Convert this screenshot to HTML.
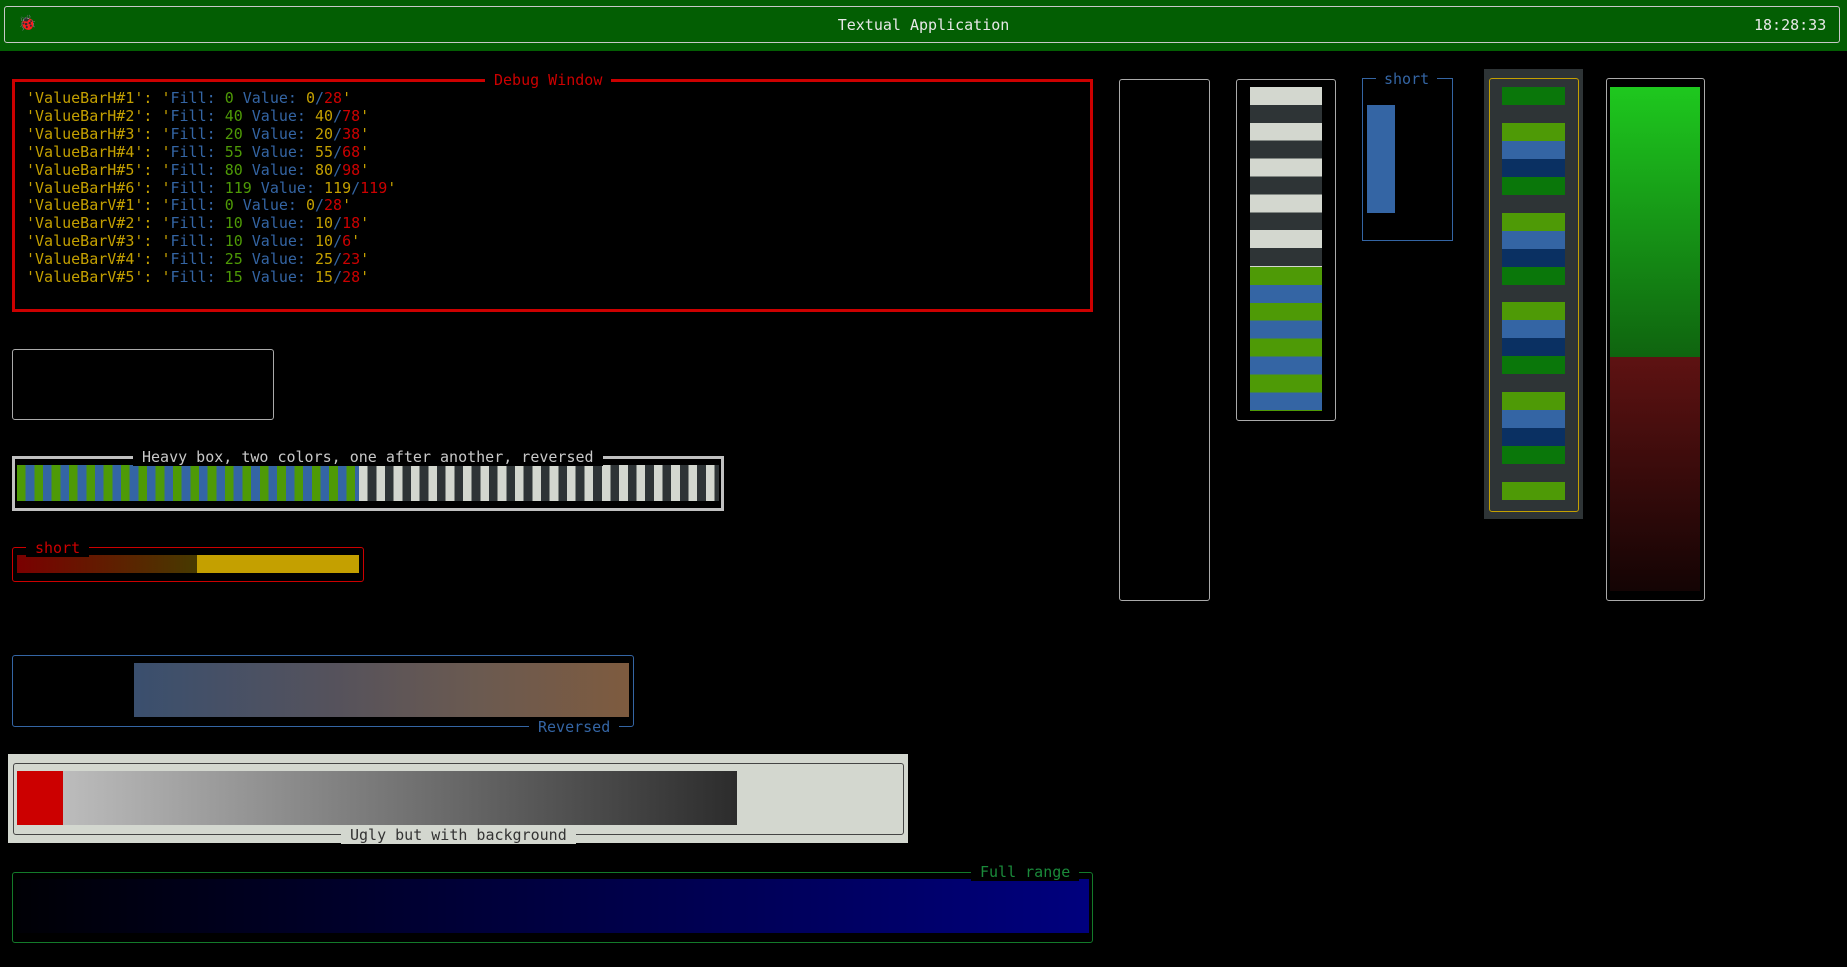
<!DOCTYPE html>
<html><head><meta charset="utf-8"><style>
*{margin:0;padding:0;box-sizing:border-box}
body{width:1847px;height:967px;background:#000;position:relative;overflow:hidden;font-family:"DejaVu Sans Mono","Liberation Mono",monospace;font-size:15px;line-height:17.9px}
div,span.a{position:absolute}
.t{position:absolute;background:#000;padding:0 9px;white-space:pre;line-height:18px}
.dbg{left:26px;top:90px;white-space:pre;color:#c4a000}
.k{color:#c4a000}.b{color:#3465a4}.g{color:#4e9a06}.r{color:#cc0000}
</style></head><body>
<!-- header -->
<div style="left:0;top:0;width:1847px;height:51px;background:#035e03"></div>
<div style="left:4px;top:6px;width:1836px;height:37px;border:1px solid #c8c8c8;border-radius:3px"></div>
<div style="left:18px;top:15px;color:#e03030;font-size:15px">🐞</div>
<div style="left:0;top:17px;width:1847px;text-align:center;color:#e8e8e8;white-space:pre">Textual Application</div>
<div style="left:1754px;top:17px;color:#e8e8e8">18:28:33</div>

<!-- debug window -->
<div style="left:12px;top:79px;width:1081px;height:233px;border:3px solid #cc0000"></div>
<div class="t" style="left:485px;top:71px;color:#cc0000">Debug Window</div>
<div class="dbg"><span class="k">'ValueBarH#1'</span>: '<span class="b">Fill: </span><span class="g">0</span><span class="b"> Value: </span>0<span class="b">/</span><span class="r">28</span>'
'ValueBarH#2': '<span class="b">Fill: </span><span class="g">40</span><span class="b"> Value: </span>40<span class="b">/</span><span class="r">78</span>'
'ValueBarH#3': '<span class="b">Fill: </span><span class="g">20</span><span class="b"> Value: </span>20<span class="b">/</span><span class="r">38</span>'
'ValueBarH#4': '<span class="b">Fill: </span><span class="g">55</span><span class="b"> Value: </span>55<span class="b">/</span><span class="r">68</span>'
'ValueBarH#5': '<span class="b">Fill: </span><span class="g">80</span><span class="b"> Value: </span>80<span class="b">/</span><span class="r">98</span>'
'ValueBarH#6': '<span class="b">Fill: </span><span class="g">119</span><span class="b"> Value: </span>119<span class="b">/</span><span class="r">119</span>'
'ValueBarV#1': '<span class="b">Fill: </span><span class="g">0</span><span class="b"> Value: </span>0<span class="b">/</span><span class="r">28</span>'
'ValueBarV#2': '<span class="b">Fill: </span><span class="g">10</span><span class="b"> Value: </span>10<span class="b">/</span><span class="r">18</span>'
'ValueBarV#3': '<span class="b">Fill: </span><span class="g">10</span><span class="b"> Value: </span>10<span class="b">/</span><span class="r">6</span>'
'ValueBarV#4': '<span class="b">Fill: </span><span class="g">25</span><span class="b"> Value: </span>25<span class="b">/</span><span class="r">23</span>'
'ValueBarV#5': '<span class="b">Fill: </span><span class="g">15</span><span class="b"> Value: </span>15<span class="b">/</span><span class="r">28</span>'</div>

<!-- empty box -->
<div style="left:12px;top:349px;width:262px;height:71px;border:1px solid #aaa;border-radius:3px"></div>

<!-- heavy box -->
<div style="left:12px;top:456px;width:712px;height:55px;border:3px solid #c0c0c0"></div>
<div style="left:17px;top:465px;width:342px;height:36px;background:repeating-linear-gradient(90deg,#4e9a06 0 8.67px,#3465a4 8.67px 17.34px)"></div>
<div style="left:359px;top:465px;width:360px;height:36px;background:repeating-linear-gradient(90deg,#d3d7cf 0 8.67px,#2e3436 8.67px 17.34px)"></div>
<div class="t" style="left:133px;top:448px;color:#c8c8c8">Heavy box, two colors, one after another, reversed</div>

<!-- short red -->
<div style="left:12px;top:547px;width:352px;height:35px;border:1px solid #cc0000;border-radius:3px"></div>
<div style="left:17px;top:555px;width:180px;height:18px;background:linear-gradient(90deg,#7a0000,#473a00)"></div>
<div style="left:197px;top:555px;width:162px;height:18px;background:#c4a000"></div>
<div class="t" style="left:26px;top:539px;color:#cc0000">short</div>

<!-- reversed -->
<div style="left:12px;top:655px;width:622px;height:72px;border:1px solid #3465a4;border-radius:3px"></div>
<div style="left:134px;top:663px;width:495px;height:54px;background:linear-gradient(90deg,#3a4f6e,#55525c 40%,#6b5a50 70%,#7e5b3f)"></div>
<div class="t" style="left:529px;top:718px;color:#3465a4">Reversed</div>

<!-- ugly -->
<div style="left:8px;top:754px;width:900px;height:89px;background:#d3d7cf"></div>
<div style="left:13px;top:763px;width:891px;height:72px;border:1px solid #444;border-radius:3px"></div>
<div style="left:17px;top:771px;width:46px;height:54px;background:#cc0000"></div>
<div style="left:63px;top:771px;width:674px;height:54px;background:linear-gradient(90deg,#bcbcbc,#2c2c2c)"></div>
<div class="t" style="left:341px;top:826px;color:#333;background:#d3d7cf">Ugly but with background</div>

<!-- full range -->
<div style="left:12px;top:872px;width:1081px;height:71px;border:1px solid #137a2a;border-radius:3px"></div>
<div style="left:17px;top:879px;width:1072px;height:54px;background:linear-gradient(90deg,#000005,#00007e)"></div>
<div class="t" style="left:971px;top:863px;color:#1a8a3a">Full range</div>

<!-- right side -->
<div style="left:1119px;top:79px;width:91px;height:522px;border:1px solid #aaa;border-radius:3px"></div>

<div style="left:1236px;top:79px;width:100px;height:342px;border:1px solid #aaa;border-radius:3px"></div>
<div style="left:1250px;top:87px;width:72px;height:180px;background:repeating-linear-gradient(180deg,#d3d7cf 0 17.9px,#2e3436 17.9px 35.8px)"></div>
<div style="left:1250px;top:267px;width:72px;height:144px;background:repeating-linear-gradient(180deg,#4e9a06 0 17.9px,#3465a4 17.9px 35.8px)"></div>

<div style="left:1362px;top:78px;width:91px;height:163px;border:1px solid #3465a4"></div>
<div style="left:1367px;top:105px;width:28px;height:108px;background:#3465a4"></div>
<div class="t" style="left:1376px;top:70px;color:#3465a4;padding:0 8px">short</div>

<div style="left:1484px;top:69px;width:99px;height:450px;background:#2e3436"></div>
<div style="left:1489px;top:78px;width:90px;height:434px;border:1px solid #c4a000;border-radius:3px"></div>
<div style="left:1502px;top:87px;width:63px;height:18px;background:#0a770a"></div>
<div style="left:1502px;top:123px;width:63px;height:89.5px;background:linear-gradient(180deg,#4e9a06 0 20%,#3465a4 20% 40%,#0a3062 40% 60%,#0a770a 60% 80%,transparent 80%)"></div>
<div style="left:1502px;top:213px;width:63px;height:89.5px;background:linear-gradient(180deg,#4e9a06 0 20%,#3465a4 20% 40%,#0a3062 40% 60%,#0a770a 60% 80%,transparent 80%)"></div>
<div style="left:1502px;top:302px;width:63px;height:89.5px;background:linear-gradient(180deg,#4e9a06 0 20%,#3465a4 20% 40%,#0a3062 40% 60%,#0a770a 60% 80%,transparent 80%)"></div>
<div style="left:1502px;top:392px;width:63px;height:89.5px;background:linear-gradient(180deg,#4e9a06 0 20%,#3465a4 20% 40%,#0a3062 40% 60%,#0a770a 60% 80%,transparent 80%)"></div>
<div style="left:1502px;top:482px;width:63px;height:18px;background:#4e9a06"></div>

<div style="left:1606px;top:78px;width:99px;height:523px;border:1px solid #aaa;border-radius:3px"></div>
<div style="left:1610px;top:87px;width:90px;height:270px;background:linear-gradient(180deg,#1ec81e,#0f640f)"></div>
<div style="left:1610px;top:357px;width:90px;height:234px;background:linear-gradient(180deg,#5e1212,#140404)"></div>
</body></html>
